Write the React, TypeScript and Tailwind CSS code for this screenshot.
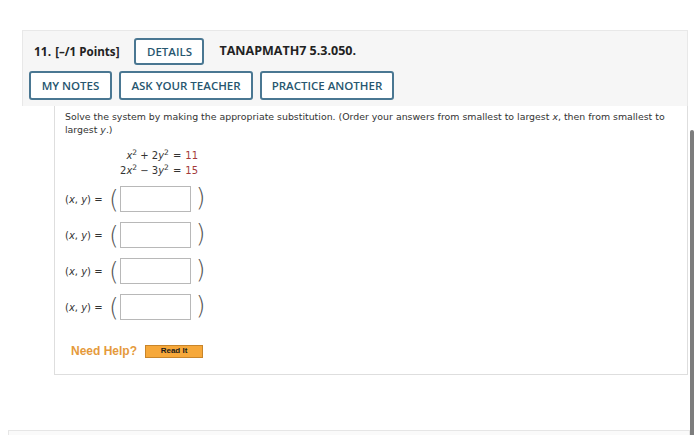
import React from 'react'

const btn =
  'flex shrink-0 items-center justify-center whitespace-nowrap rounded-[3px] border-2 border-[#4a7792] bg-white text-[11.5px] font-semibold text-[#27566f]'

function Paren({ ch }: { ch: string }) {
  return (
    <span className="text-[25px] leading-none font-extralight text-[#555]" style={{ fontFamily: '"DejaVu Sans", sans-serif' }}>
      {ch}
    </span>
  )
}

function AnswerRow() {
  return (
    <div className="flex h-[36px] items-center">
      <span className="w-[44px] text-[10px] text-[#333]">
        (<i>x</i>, <i>y</i>) =
      </span>
      <Paren ch="(" />
      <div className="ml-[1px] mr-[3px] h-[26px] w-[71px] border border-[#b8b8b8] bg-white" />
      <span className="ml-[2px]">
        <Paren ch=")" />
      </span>
    </div>
  )
}

export default function App() {
  return (
    <div className="relative h-[435px] w-[700px] overflow-hidden bg-white" style={{ fontFamily: '"Open Sans", sans-serif' }}>
      <div className="ml-[22px] pt-[30px] w-[666px]">
        {/* question header */}
        <div className="border border-b-0 border-[#e8e8e8] bg-[#f6f6f6] px-[6px] pt-[7px] pb-[6px]">
          <div className="flex h-[27px] items-center pl-[5px] whitespace-nowrap">
            <span className="text-[12px] font-bold text-[#222]">11.</span>
            <span className="ml-[4px] text-[11.6px] font-bold text-[#222]">[–/1 Points]</span>
            <div className={btn + ' ml-[15px] h-[27px] w-[70px]'}>DETAILS</div>
            <span className="ml-[15px] text-[12.5px] font-bold text-[#222]">TANAPMATH7 5.3.050.</span>
          </div>
          <div className="mt-[6px] flex h-[29px] gap-[7px]">
            <div className={btn + ' w-[83px]'}>MY NOTES</div>
            <div className={btn + ' w-[134px]'}>ASK YOUR TEACHER</div>
            <div className={btn + ' w-[134px]'}>PRACTICE ANOTHER</div>
          </div>
        </div>

        {/* question body */}
        <div
          className="ml-[32px] h-[269px] w-[634px] border border-t-0 border-[#dedede] px-[10px] pt-[4px] text-[#333]"
          style={{ fontFamily: '"DejaVu Sans", Verdana, sans-serif' }}
        >
          <p className="text-[9.4px] leading-[13px]">
            Solve the system by making the appropriate substitution. (Order your answers from smallest to largest <i>x</i>, then from
            smallest to largest <i>y</i>.)
          </p>
          <table className="mt-[12px] ml-[55px] text-[10px] leading-[15px]">
            <tbody>
              <tr>
                <td className="text-right">
                  <i>x</i>
                  <sup>2</sup> + 2<i>y</i>
                  <sup>2</sup>
                </td>
                <td className="px-[4px]">=</td>
                <td className="text-[#a33a3a]">11</td>
              </tr>
              <tr>
                <td className="text-right">
                  2<i>x</i>
                  <sup>2</sup> − 3<i>y</i>
                  <sup>2</sup>
                </td>
                <td className="px-[4px]">=</td>
                <td className="text-[#a33a3a]">15</td>
              </tr>
            </tbody>
          </table>
          <div className="mt-[3px]">
            <AnswerRow />
            <AnswerRow />
            <AnswerRow />
            <AnswerRow />
          </div>
          <div className="mt-[17px] ml-[6px] flex items-center" style={{ fontFamily: '"Liberation Sans", Arial, sans-serif' }}>
            <span className="text-[12px] font-bold text-[#e59a3c]">Need Help?</span>
            <div className="ml-[8px] flex h-[13px] w-[58px] items-center justify-center border border-[#c8852a] bg-[#f6a83a] text-[8px] font-bold text-[#1a1a1a]">
              Read It
            </div>
          </div>
        </div>
      </div>

      {/* next question panel edge */}
      <div className="absolute left-[8px] top-[430px] h-[10px] w-[682px] border border-[#e6e6e6] bg-[#fafafa]" />

      {/* scrollbar */}
      <div className="absolute left-[690px] top-[130px] h-[310px] w-[4px] rounded-full bg-[#7d7d7d]" />
    </div>
  )
}
